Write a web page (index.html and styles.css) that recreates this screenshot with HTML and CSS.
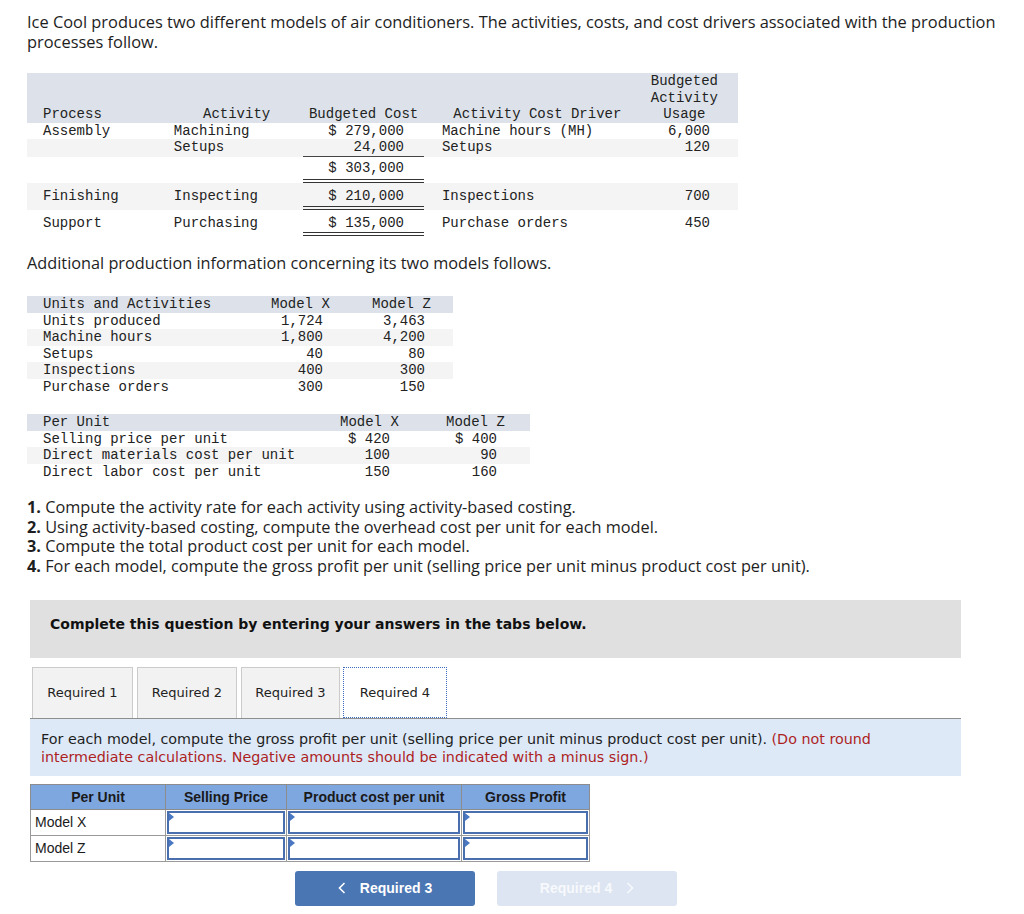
FILE: index.html
```html
<!DOCTYPE html>
<html lang="en">
<head>
  <meta charset="UTF-8">
  <meta name="viewport" content="width=device-width, initial-scale=1.0">
  <title>Ice Cool - Activity-Based Costing</title>
  <link rel="stylesheet" href="styles.css">
</head>
<body>
  <div class="page">
    <p class="lead">Ice Cool produces two different models of air conditioners. The activities, costs, and cost drivers associated with the production processes follow.</p>

    <!-- Activity costs -->
    <table class="data costs">
      <thead>
        <tr>
          <th class="c-proc">Process</th>
          <th class="c-act">Activity</th>
          <th class="c-cost">Budgeted Cost</th>
          <th class="c-driver">Activity Cost Driver</th>
          <th class="c-usage">Budgeted<br>Activity<br>Usage</th>
        </tr>
      </thead>
      <tbody>
        <tr>
          <td class="lbl">Assembly</td><td>Machining</td><td class="cost">$ 279,000</td><td class="drv">Machine hours (MH)</td><td class="use">6,000</td>
        </tr>
        <tr class="alt">
          <td class="lbl"></td><td>Setups</td><td class="cost under">24,000</td><td class="drv">Setups</td><td class="use">120</td>
        </tr>
        <tr class="total">
          <td class="lbl"></td><td></td><td class="cost dbl">$ 303,000</td><td></td><td></td>
        </tr>
        <tr class="group alt">
          <td class="lbl">Finishing</td><td>Inspecting</td><td class="cost dbl">$ 210,000</td><td class="drv">Inspections</td><td class="use">700</td>
        </tr>
        <tr class="group">
          <td class="lbl">Support</td><td>Purchasing</td><td class="cost dbl">$ 135,000</td><td class="drv">Purchase orders</td><td class="use">450</td>
        </tr>
      </tbody>
    </table>

    <p class="para">Additional production information concerning its two models follows.</p>

    <table class="data units">
      <thead>
        <tr>
          <th class="u-lbl">Units and Activities</th>
          <th class="u-x">Model X</th>
          <th class="u-z">Model Z</th>
        </tr>
      </thead>
      <tbody>
        <tr><td class="lbl">Units produced</td><td class="ux">1,724</td><td class="uz">3,463</td></tr>
        <tr class="alt"><td class="lbl">Machine hours</td><td class="ux">1,800</td><td class="uz">4,200</td></tr>
        <tr><td class="lbl">Setups</td><td class="ux">40</td><td class="uz">80</td></tr>
        <tr class="alt"><td class="lbl">Inspections</td><td class="ux">400</td><td class="uz">300</td></tr>
        <tr><td class="lbl">Purchase orders</td><td class="ux">300</td><td class="uz">150</td></tr>
      </tbody>
    </table>

    <table class="data per-unit">
      <thead>
        <tr>
          <th class="p-lbl">Per Unit</th>
          <th class="p-x">Model X</th>
          <th class="p-z">Model Z</th>
        </tr>
      </thead>
      <tbody>
        <tr><td class="lbl">Selling price per unit</td><td class="px">$ 420</td><td class="pz">$ 400</td></tr>
        <tr class="alt"><td class="lbl">Direct materials cost per unit</td><td class="px">100</td><td class="pz">90</td></tr>
        <tr><td class="lbl">Direct labor cost per unit</td><td class="px">150</td><td class="pz">160</td></tr>
      </tbody>
    </table>

    <ol class="tasks">
      <li><strong>1.</strong> Compute the activity rate for each activity using activity-based costing.</li>
      <li><strong>2.</strong> Using activity-based costing, compute the overhead cost per unit for each model.</li>
      <li><strong>3.</strong> Compute the total product cost per unit for each model.</li>
      <li><strong>4.</strong> For each model, compute the gross profit per unit (selling price per unit minus product cost per unit).</li>
    </ol>

    <div class="quiz">
      <div class="quiz-head">Complete this question by entering your answers in the tabs below.</div>

      <div class="tabs">
        <div class="tab t1">Required 1</div>
        <div class="tab t2">Required 2</div>
        <div class="tab t3">Required 3</div>
        <div class="tab t4 active">Required 4</div>
      </div>

      <div class="prompt">For each model, compute the gross profit per unit (selling price per unit minus product cost per unit). <span class="warn">(Do not round intermediate calculations. Negative amounts should be indicated with a minus sign.)</span></div>

      <table class="answers">
        <thead>
          <tr>
            <th class="a1">Per Unit</th>
            <th class="a2">Selling Price</th>
            <th class="a3">Product cost per unit</th>
            <th class="a4">Gross Profit</th>
          </tr>
        </thead>
        <tbody>
          <tr>
            <td class="row-lbl">Model X</td>
            <td class="entry"><span class="field"></span></td>
            <td class="entry"><span class="field"></span></td>
            <td class="entry"><span class="field"></span></td>
          </tr>
          <tr>
            <td class="row-lbl">Model Z</td>
            <td class="entry"><span class="field"></span></td>
            <td class="entry"><span class="field"></span></td>
            <td class="entry"><span class="field"></span></td>
          </tr>
        </tbody>
      </table>

      <div class="nav">
        <button class="nav-btn prev">
          <svg width="8" height="12" viewBox="0 0 8 12"><polyline points="6.5,1 1.5,6 6.5,11" fill="none" stroke="currentColor" stroke-width="1.6"/></svg>
          <span>Required 3</span>
        </button>
        <button class="nav-btn next" disabled>
          <span>Required 4</span>
          <svg width="8" height="12" viewBox="0 0 8 12"><polyline points="1.5,1 6.5,6 1.5,11" fill="none" stroke="currentColor" stroke-width="1.6"/></svg>
        </button>
      </div>
    </div>
  </div>
</body>
</html>
```

FILE: styles.css
```css
* {
  box-sizing: border-box;
}

html, body {
  margin: 0;
  padding: 0;
}

body {
  background: #fff;
  color: #1e1e1e;
  font-family: "Liberation Sans", Arial, sans-serif;
}

.page {
  padding: 12px 10px 8px 27px;
}

.lead {
  margin: 0;
  width: 985px;
  font-family: "Open Sans", "Liberation Sans", sans-serif;
  font-size: 16.4px;
  line-height: 20px;
}

.para {
  margin: 17px 0 0;
  font-family: "Open Sans", "Liberation Sans", sans-serif;
  font-size: 16.3px;
  line-height: 20px;
}

/* monospace data tables */
.data {
  border-collapse: separate;
  border-spacing: 0;
  font-family: "Liberation Mono", "Courier New", monospace;
  font-size: 14px;
  line-height: 16.5px;
  color: #222;
}

.data th {
  font-weight: normal;
  background: #dde2ea;
  vertical-align: bottom;
  padding: 0;
  white-space: nowrap;
}

.data td {
  padding: 0;
  vertical-align: top;
  white-space: pre;
}

.data tr.alt td {
  background: #f4f4f4;
}

.data td.lbl {
  padding-left: 16px;
}

/* activity costs */
.costs {
  margin-top: 21px;
  width: 711px;
}

.c-proc { width: 148px; text-align: left; padding-left: 16px !important; }
.c-act { width: 130px; text-align: right; padding-right: 33px !important; }
.c-cost { width: 121px; text-align: center; }
.c-driver { width: 228px; text-align: center; }
.c-usage { width: 84px; text-align: center; padding-right: 20px !important; }

.costs td.cost {
  text-align: right;
  padding-right: 20px;
}

.costs td.drv {
  padding-left: 18px;
}

.costs td.use {
  text-align: right;
  padding-right: 28px;
}

.costs td.under {
  border-bottom: 1px solid #444;
}

.costs tr.total td {
  padding-top: 3px;
  padding-bottom: 3px;
}

.costs tr.group td {
  padding-top: 5px;
  padding-bottom: 1px;
}

.costs td.dbl {
  border-bottom: 4px double #333;
}

/* units and activities */
.units {
  margin-top: 23px;
  width: 426px;
}

.u-lbl { width: 235px; text-align: left; padding-left: 16px !important; }
.u-x { width: 78px; text-align: left; padding-left: 9px !important; }
.u-z { width: 113px; text-align: left; padding-left: 32px !important; }

.units td.ux { text-align: right; padding-right: 17px; }
.units td.uz { text-align: right; padding-right: 28px; }

/* per unit */
.per-unit {
  margin-top: 19px;
  width: 503px;
}

.p-lbl { width: 293px; text-align: left; padding-left: 16px !important; }
.p-x { width: 100px; text-align: left; padding-left: 20px !important; }
.p-z { width: 110px; text-align: left; padding-left: 26px !important; }

.per-unit td.px { text-align: right; padding-right: 30px; }
.per-unit td.pz { text-align: right; padding-right: 33px; }

.tasks {
  list-style: none;
  margin: 18px 0 0;
  padding: 0;
  font-family: "Open Sans", "Liberation Sans", sans-serif;
  font-size: 16.3px;
  line-height: 19.7px;
}

/* answer area */
.quiz {
  margin: 23px 0 0 3px;
  width: 931px;
  font-size: 14px;
}

.quiz-head {
  background: #e0e0e0;
  padding: 15px 20px 25px;
  font-family: "DejaVu Sans", Verdana, sans-serif;
  font-size: 14px;
  line-height: 18px;
  font-weight: bold;
  color: #111;
}

.tabs {
  display: flex;
  margin-top: 9px;
  padding-left: 2px;
  border-bottom: 1px solid #8e8e8e;
}

.tab {
  display: flex;
  align-items: center;
  justify-content: center;
  height: 51px;
  margin-right: 4px;
  background: #f2f2f2;
  border: 1px solid #cbcbcb;
  border-bottom: none;
  font-family: "DejaVu Sans", Verdana, sans-serif;
  font-size: 13px;
  color: #222;
}

.t1 { width: 101px; }
.t2 { width: 100px; }
.t3 { width: 99px; margin-right: 3px; }
.t4 { width: 104px; }

.tab.active {
  background: #fff;
  border: 1px dotted #3b6cc0;
}

.prompt {
  background: #dde9f7;
  padding: 11px 11px 10px;
  font-family: "DejaVu Sans", Verdana, sans-serif;
  font-size: 14.3px;
  line-height: 18px;
  color: #1e1e1e;
}

.warn {
  color: #ad1f1f;
}

.answers {
  margin-top: 8px;
  width: 559px;
  border-collapse: collapse;
  table-layout: fixed;
}

.answers th {
  height: 25px;
  padding: 0;
  background: #7fa7df;
  border: 1px solid #8c8c8c;
  font-weight: bold;
  color: #1a1a1a;
  text-align: center;
}

.a1 { width: 135px; }
.a2 { width: 121px; }
.a3 { width: 175px; }
.a4 { width: 128px; }

.answers td {
  height: 25px;
  padding: 0;
  border: 1px solid #9a9a9a;
}

.answers td.row-lbl {
  padding-left: 4px;
  color: #1a1a1a;
}

.answers td.entry {
  position: relative;
  padding: 1px;
}

.field {
  display: block;
  height: 23px;
  border: 2px solid #4a6fae;
  background: #fff;
}

.entry::before {
  content: "";
  position: absolute;
  top: 3px;
  left: 3px;
  border-top: 4px solid transparent;
  border-bottom: 4px solid transparent;
  border-left: 5px solid #4a78c2;
}

.nav {
  display: flex;
  gap: 22px;
  margin-top: 9px;
  padding-left: 265px;
}

.nav-btn {
  display: flex;
  align-items: center;
  justify-content: center;
  gap: 14px;
  width: 180px;
  height: 35px;
  border: none;
  border-radius: 3px;
  font-family: "Liberation Sans", Arial, sans-serif;
  font-size: 14px;
  font-weight: bold;
  color: #fff;
}

.nav-btn.prev {
  background: #4a76b4;
}

.nav-btn.next {
  background: #dce5f1;
  color: #f7f9fc;
}
```
